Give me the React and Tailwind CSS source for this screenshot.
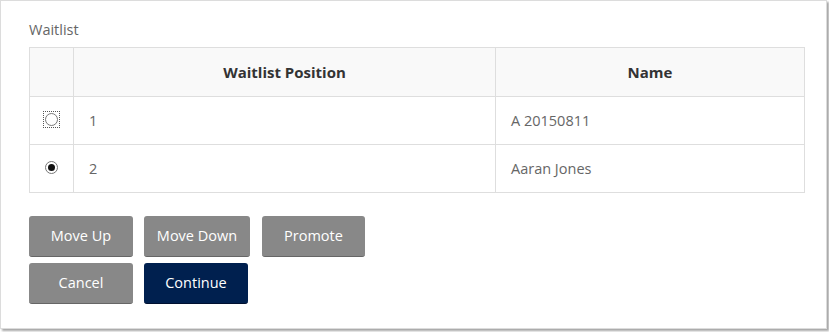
export default function App() {
  const rows = [
    { pos: '1', name: 'A 20150811', checked: false, focused: true },
    { pos: '2', name: 'Aaran Jones', checked: true, focused: false },
  ]

  return (
    <div className="w-[829px] h-[332px] bg-white" style={{ fontFamily: '"Open Sans", sans-serif' }}>
      <div className="w-[827px] h-[329px] border border-[#dcdcdc] shadow-[2px_2px_2px_rgba(0,0,0,0.35)] bg-white px-[28px] pt-[19px]">
        <div className="text-[14.5px] leading-[20px] text-[#666]">Waitlist</div>

        <table className="mt-[7px] w-[776px] border-collapse text-[14.5px] text-[#666]">
          <thead>
            <tr className="bg-[#f9f9f9] h-[49px]">
              <th className="w-[44px] border border-[#dedede]"></th>
              <th className="w-[422px] border border-[#dedede] text-[15px] font-bold text-[#333]">Waitlist Position</th>
              <th className="border border-[#dedede] text-[15px] font-bold text-[#333]">Name</th>
            </tr>
          </thead>
          <tbody>
            {rows.map(r => (
              <tr key={r.pos} className="h-[48px]">
                <td className="border border-[#dedede] align-middle">
                  <div className="flex justify-center mb-[3px]">
                    <span className={`flex items-center justify-center w-[15px] h-[15px] ${r.focused ? 'outline-1 outline-dotted outline-[#555]' : ''}`}>
                      <span className="flex items-center justify-center w-[13px] h-[13px] rounded-full border border-[#777] bg-white">
                        {r.checked && <span className="w-[7px] h-[7px] rounded-full bg-[#111]" />}
                      </span>
                    </span>
                  </div>
                </td>
                <td className="border border-[#dedede] px-[15px]">{r.pos}</td>
                <td className="border border-[#dedede] px-[15px]">{r.name}</td>
              </tr>
            ))}
          </tbody>
        </table>

        <div className="mt-[23px] flex gap-[11px]">
          <button className="w-[104px] h-[41px] rounded-[3px] bg-[#888] border-b border-[#666] text-white text-[14.5px]">Move Up</button>
          <button className="w-[106px] h-[41px] rounded-[3px] bg-[#888] border-b border-[#666] text-white text-[14.5px]">Move Down</button>
          <button className="ml-[1px] w-[103px] h-[41px] rounded-[3px] bg-[#888] border-b border-[#666] text-white text-[14.5px]">Promote</button>
        </div>
        <div className="mt-[6px] flex gap-[11px]">
          <button className="w-[104px] h-[41px] rounded-[3px] bg-[#888] border-b border-[#666] text-white text-[14.5px]">Cancel</button>
          <button className="w-[104px] h-[41px] rounded-[3px] bg-[#00204f] border-b border-[#001030] text-white text-[14.5px]">Continue</button>
        </div>
      </div>
    </div>
  )
}
